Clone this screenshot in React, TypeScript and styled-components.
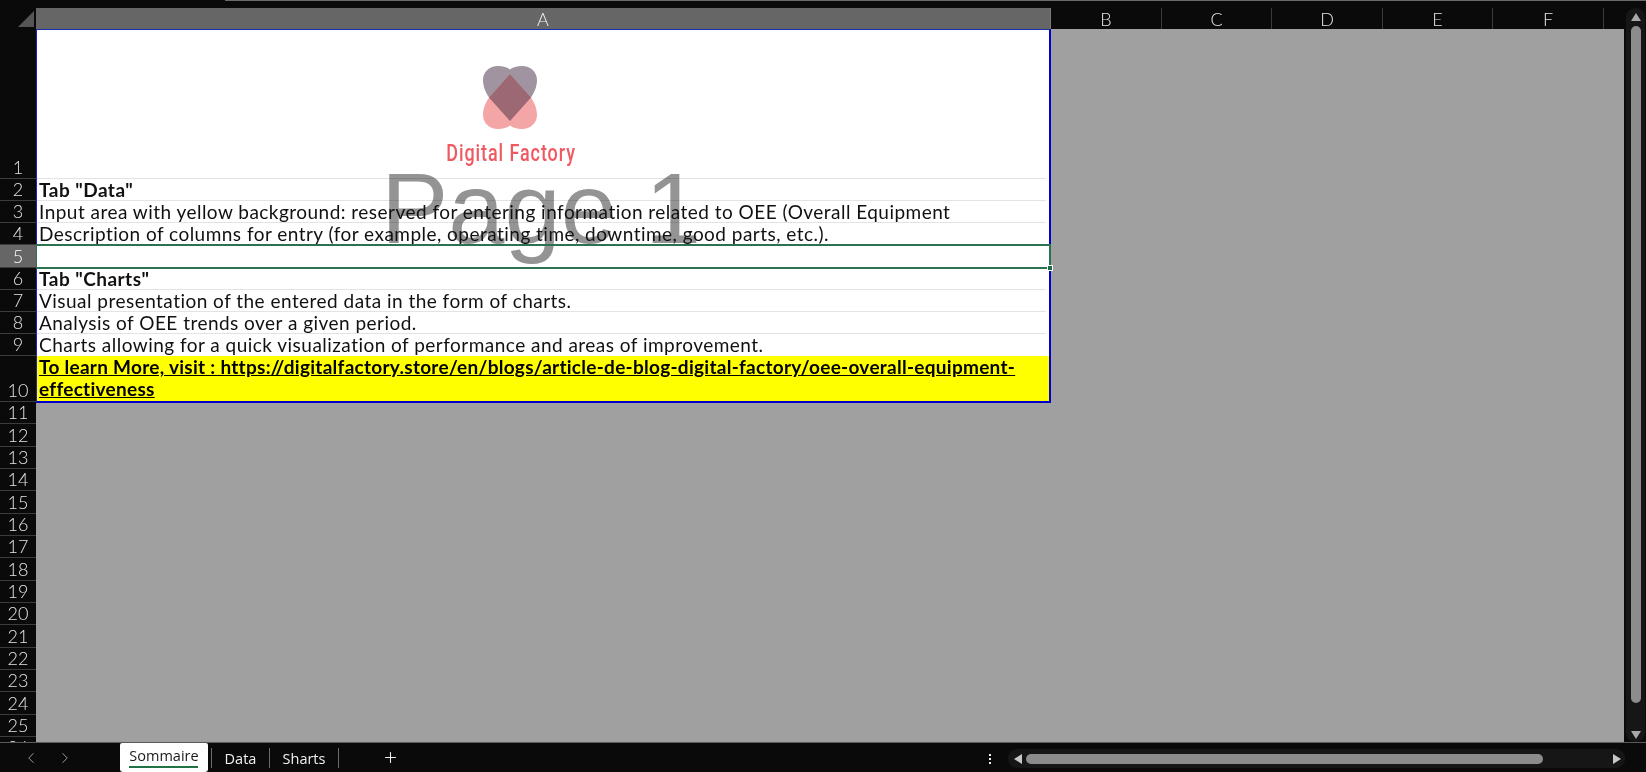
import React from 'react'
import styled, { createGlobalStyle } from 'styled-components'
import { ChevronLeft, ChevronRight, Plus } from 'lucide-react'

const GlobalStyle = createGlobalStyle`
  html, body { margin: 0; padding: 0; height: 100%; overflow: hidden; background: #0a0a0a; }
  * { box-sizing: border-box; }
`

const Page = styled.div`
  width: 1646px;
  height: 772px;
  display: flex;
  flex-direction: column;
  background: #0a0a0a;
  overflow: hidden;
  font-family: 'Lato', sans-serif;
`

const TopStrip = styled.div`
  height: 8px;
  flex: none;
  padding-left: 225px;
`

const TopLine = styled.div`
  height: 1px;
  background: #6a6a6a;
`

const Workspace = styled.div`
  height: 734px;
  flex: none;
  display: flex;
`

const SheetArea = styled.div`
  width: 1624px;
  flex: none;
  display: flex;
  flex-direction: column;
`

const ColumnBar = styled.div`
  height: 21px;
  flex: none;
  display: flex;
`

const Corner = styled.div`
  width: 36px;
  display: flex;
  align-items: flex-end;
  justify-content: flex-end;
  padding: 0 2px 2px 0;
`

const ColumnHead = styled.div<{ $w: number; $active?: boolean }>`
  width: ${({ $w }) => $w}px;
  display: flex;
  align-items: center;
  justify-content: center;
  font-size: 18px;
  font-weight: 300;
  color: ${({ $active }) => ($active ? '#f2f2f2' : '#e4e4e4')};
  background: ${({ $active }) => ($active ? '#666666' : '#0a0a0a')};
  border-right: 1px solid ${({ $active }) => ($active ? '#7a7a7a' : '#3a3a3a')};
`

const Grid = styled.div`
  position: relative;
  flex: 1;
  overflow: hidden;
  background: #a0a0a0;
`

const Row = styled.div<{ $h: number }>`
  height: ${({ $h }) => $h}px;
  display: flex;
`

const RowHead = styled.div<{ $active?: boolean }>`
  width: 36px;
  flex: none;
  display: flex;
  align-items: flex-end;
  justify-content: center;
  font-size: 18px;
  line-height: 21px;
  font-weight: 300;
  color: ${({ $active }) => ($active ? '#ffffff' : '#e4e4e4')};
  background: ${({ $active }) => ($active ? '#666666' : '#0a0a0a')};
  border-bottom: 1px solid #3c3c3c;
`

const Cell = styled.div<{ $first?: boolean; $last?: boolean; $fill?: string; $line?: boolean }>`
  position: relative;
  width: 1015px;
  height: ${({ $last }) => ($last ? 'calc(100% + 1px)' : '100%')};
  flex: none;
  background: ${({ $fill }) => $fill ?? '#ffffff'};
  border-left: 1px solid #2020d0;
  border-right: 2px solid #0000cc;
  border-top: ${({ $first }) => ($first ? '1px solid #1a2fb0' : '0')};
  border-bottom: ${({ $last }) => ($last ? '2px solid #0000cc' : '0')};
  padding-left: 2px;

  &::after {
    content: '';
    display: ${({ $line }) => ($line ? 'block' : 'none')};
    position: absolute;
    left: 0;
    right: 3px;
    bottom: 0;
    height: 1px;
    background: #e3e3e3;
  }
`

const BlankCell = styled.div`
  flex: 1;
`

const CellText = styled.div<{ $bold?: boolean }>`
  position: relative;
  z-index: 2;
  font-family: 'Lato', sans-serif;
  font-size: 19px;
  line-height: 22px;
  color: #111111;
  white-space: nowrap;
  letter-spacing: 0.47px;
  font-weight: ${({ $bold }) => ($bold ? 700 : 400)};
`

const LinkText = styled(CellText)`
  color: #000000;
  text-decoration: underline;
  letter-spacing: 0.28px;
`

const Selection = styled.div`
  position: absolute;
  z-index: 3;
  left: -1px;
  right: -2px;
  top: -1px;
  bottom: -1px;
  border: 2px solid #2b7350;
  border-left-width: 1px;
`

const FillHandle = styled.div`
  position: absolute;
  right: -4px;
  bottom: -4px;
  width: 6px;
  height: 6px;
  background: #1f6b45;
  border: 1px solid #ffffff;
`

const Watermark = styled.div`
  position: absolute;
  z-index: 1;
  left: 381px;
  top: 123px;
  font-family: 'Liberation Sans', sans-serif;
  font-size: 101px;
  line-height: 112px;
  color: #949494;
  mix-blend-mode: multiply;
  white-space: nowrap;
`

const LogoCell = styled.div`
  height: 100%;
  display: flex;
  flex-direction: column;
  align-items: center;
  padding: 36px 66px 0 0;
`

const LogoSvg = styled.svg`
  flex: none;
  margin-right: 3px;
`

const LogoName = styled.div`
  margin-top: 13px;
  font-family: 'Roboto', sans-serif;
  font-weight: 500;
  font-size: 23px;
  line-height: 24px;
  color: #ef5a62;
  letter-spacing: 1.2px;
  white-space: nowrap;
  transform: scaleX(0.78);
`

const VScroll = styled.div`
  flex: 1;
  padding: 0 1px 0 2px;
`

const VTrack = styled.div`
  height: 100%;
  border-radius: 9px;
  background: #161616;
  display: flex;
  flex-direction: column;
  align-items: center;
`

const ArrowBox = styled.div<{ $h: number; $pad: number }>`
  height: ${({ $h }) => $h}px;
  flex: none;
  display: flex;
  align-items: flex-end;
  justify-content: center;
  padding-bottom: ${({ $pad }) => $pad}px;
`

const VThumb = styled.div`
  width: 10px;
  height: 677px;
  flex: none;
  border-radius: 5px;
  background: #8c8c8c;
`

const TabBar = styled.div`
  height: 30px;
  flex: none;
  display: flex;
  border-top: 1px solid #5a5a5a;
  color: #f0f0f0;
  font-family: 'Open Sans', sans-serif;
`

const SheetNav = styled.div`
  width: 120px;
  flex: none;
  display: flex;
  align-items: center;
  gap: 16px;
  padding-left: 22px;
  color: #a0a0a0;
`

const Tab = styled.div<{ $active?: boolean; $w: number }>`
  position: relative;
  width: ${({ $w }) => $w}px;
  flex: none;
  display: flex;
  align-items: center;
  justify-content: center;
  font-size: 14.5px;
  padding-top: ${({ $active }) => ($active ? '0' : '2px')};
  padding-bottom: ${({ $active }) => ($active ? '4px' : '0')};
  color: ${({ $active }) => ($active ? '#1a1a1a' : '#f0f0f0')};
  background: ${({ $active }) => ($active ? '#ffffff' : 'transparent')};
  border-radius: ${({ $active }) => ($active ? '2px 2px 3px 3px' : '0')};
`

const TabMark = styled.div`
  position: absolute;
  left: 9px;
  right: 10px;
  bottom: 4px;
  height: 2px;
  background: #217346;
`

const TabGap = styled.div`
  width: 3px;
  flex: none;
`

const TabSeparator = styled.div`
  width: 1px;
  height: 20px;
  flex: none;
  align-self: center;
  background: #6c6c6c;
`

const AddTab = styled.div`
  width: 102px;
  flex: none;
  display: flex;
  align-items: center;
  justify-content: center;
  margin-right: 548px;
`

const Kebab = styled.div`
  width: 3px;
  flex: none;
  align-self: center;
  display: flex;
  flex-direction: column;
  gap: 2px;
  margin: 2px 16px 0 0;
`

const KebabDot = styled.div`
  width: 2px;
  height: 2px;
  background: #f0f0f0;
`

const HTrack = styled.div`
  width: 617px;
  height: 19px;
  flex: none;
  align-self: center;
  margin-top: 2px;
  border-radius: 9px;
  background: #161616;
  display: flex;
  align-items: center;
  justify-content: space-between;
  padding: 0 3px 0 5px;
`

const HThumb = styled.div`
  width: 517px;
  height: 10px;
  border-radius: 5px;
  background: #8c8c8c;
  margin: 0 auto 0 3px;
`

const Triangle: React.FC<{ dir: 'up' | 'down' | 'left' | 'right'; fill?: string }> = ({ dir, fill = '#a8a8a8' }) => {
  const points = {
    up: '0,9 5,1 10,9',
    down: '0,1 10,1 5,9',
    left: '9,0 9,10 1,5',
    right: '1,0 1,10 9,5',
  }[dir]
  return (
    <svg width="10" height="10" viewBox="0 0 10 10">
      <polygon points={points} fill={fill} />
    </svg>
  )
}

const LogoMark: React.FC = () => (
  <LogoSvg width="54" height="63" viewBox="0 0 54 63">
    <path
      d="M27 3.5 C24.5 1.2 20 0 15 0 C6.5 0 0 6 0 14 C0 21 3 27 6 31.5 L27 55 L48 31.5 C51 27 54 21 54 14 C54 6 47.5 0 39 0 C34 0 29.5 1.2 27 3.5 Z"
      fill="#9f94a0"
    />
    <path
      d="M27 59.5 C24.5 61.8 20 63 15 63 C6.5 63 0 57 0 49 C0 42 3 36 6 31.5 L27 8 L48 31.5 C51 36 54 42 54 49 C54 57 47.5 63 39 63 C34 63 29.5 61.8 27 59.5 Z"
      fill="#f4a6a6"
    />
    <path d="M27 8 L48 31.5 L27 55 L6 31.5 Z" fill="#9b6873" />
  </LogoSvg>
)

const columns = [
  { label: 'B', w: 111 },
  { label: 'C', w: 110 },
  { label: 'D', w: 111 },
  { label: 'E', w: 110 },
  { label: 'F', w: 111 },
]

const emptyRows = Array.from({ length: 16 }, (_, i) => i + 11)

const TextRow: React.FC<{ n: number; bold?: boolean; line?: boolean; children?: React.ReactNode }> = ({ n, bold, line = true, children }) => (
  <Row $h={n === 5 ? 23 : 22}>
    <RowHead $active={n === 5}>{n}</RowHead>
    <Cell $line={line}>
      <CellText $bold={bold}>{children}</CellText>
      {n === 5 && (
        <Selection>
          <FillHandle />
        </Selection>
      )}
    </Cell>
    <BlankCell />
  </Row>
)

const App: React.FC = () => {
  return (
    <Page>
      <GlobalStyle />
      <TopStrip>
        <TopLine />
      </TopStrip>
      <Workspace>
        <SheetArea>
          <ColumnBar>
            <Corner>
              <svg width="16" height="16" viewBox="0 0 16 16">
                <polygon points="16,0 16,16 0,16" fill="#565656" />
              </svg>
            </Corner>
            <ColumnHead $w={1015} $active>A</ColumnHead>
            {columns.map((c) => (
              <ColumnHead key={c.label} $w={c.w}>{c.label}</ColumnHead>
            ))}
          </ColumnBar>
          <Grid>
            <Watermark>Page 1</Watermark>
            <Row $h={150}>
              <RowHead>1</RowHead>
              <Cell $first $line>
                <LogoCell>
                  <LogoMark />
                  <LogoName>Digital Factory</LogoName>
                </LogoCell>
              </Cell>
              <BlankCell />
            </Row>
            <TextRow n={2} bold>Tab "Data"</TextRow>
            <TextRow n={3}>Input area with yellow background: reserved for entering information related to OEE (Overall Equipment</TextRow>
            <TextRow n={4}>Description of columns for entry (for example, operating time, downtime, good parts, etc.).</TextRow>
            <TextRow n={5} />
            <TextRow n={6} bold>Tab "Charts"</TextRow>
            <TextRow n={7}>Visual presentation of the entered data in the form of charts.</TextRow>
            <TextRow n={8}>Analysis of OEE trends over a given period.</TextRow>
            <TextRow n={9} line={false}>Charts allowing for a quick visualization of performance and areas of improvement.</TextRow>
            <Row $h={46}>
              <RowHead>10</RowHead>
              <Cell $last $fill="#ffff00">
                <LinkText $bold>
                  To learn More, visit : https://digitalfactory.store/en/blogs/article-de-blog-digital-factory/oee-overall-equipment-
                  <br />
                  effectiveness
                </LinkText>
              </Cell>
              <BlankCell />
            </Row>
            {emptyRows.map((n) => (
              <Row key={n} $h={22.33}>
                <RowHead>{n}</RowHead>
                <BlankCell />
              </Row>
            ))}
          </Grid>
        </SheetArea>
        <VScroll>
          <VTrack>
            <ArrowBox $h={18} $pad={4}>
              <Triangle dir="up" />
            </ArrowBox>
            <VThumb />
            <ArrowBox $h={39} $pad={2}>
              <Triangle dir="down" />
            </ArrowBox>
          </VTrack>
        </VScroll>
      </Workspace>
      <TabBar>
        <SheetNav>
          <ChevronLeft size={18} strokeWidth={1.25} />
          <ChevronRight size={18} strokeWidth={1.25} />
        </SheetNav>
        <Tab $active $w={88}>
          Sommaire
          <TabMark />
        </Tab>
        <TabGap />
        <TabSeparator />
        <Tab $w={57}>Data</Tab>
        <TabSeparator />
        <Tab $w={68}>Sharts</Tab>
        <TabSeparator />
        <AddTab>
          <Plus size={17} strokeWidth={1.5} />
        </AddTab>
        <Kebab>
          <KebabDot />
          <KebabDot />
          <KebabDot />
        </Kebab>
        <HTrack>
          <Triangle dir="left" fill="#c8c8c8" />
          <HThumb />
          <Triangle dir="right" fill="#c8c8c8" />
        </HTrack>
      </TabBar>
    </Page>
  )
}

export default App
